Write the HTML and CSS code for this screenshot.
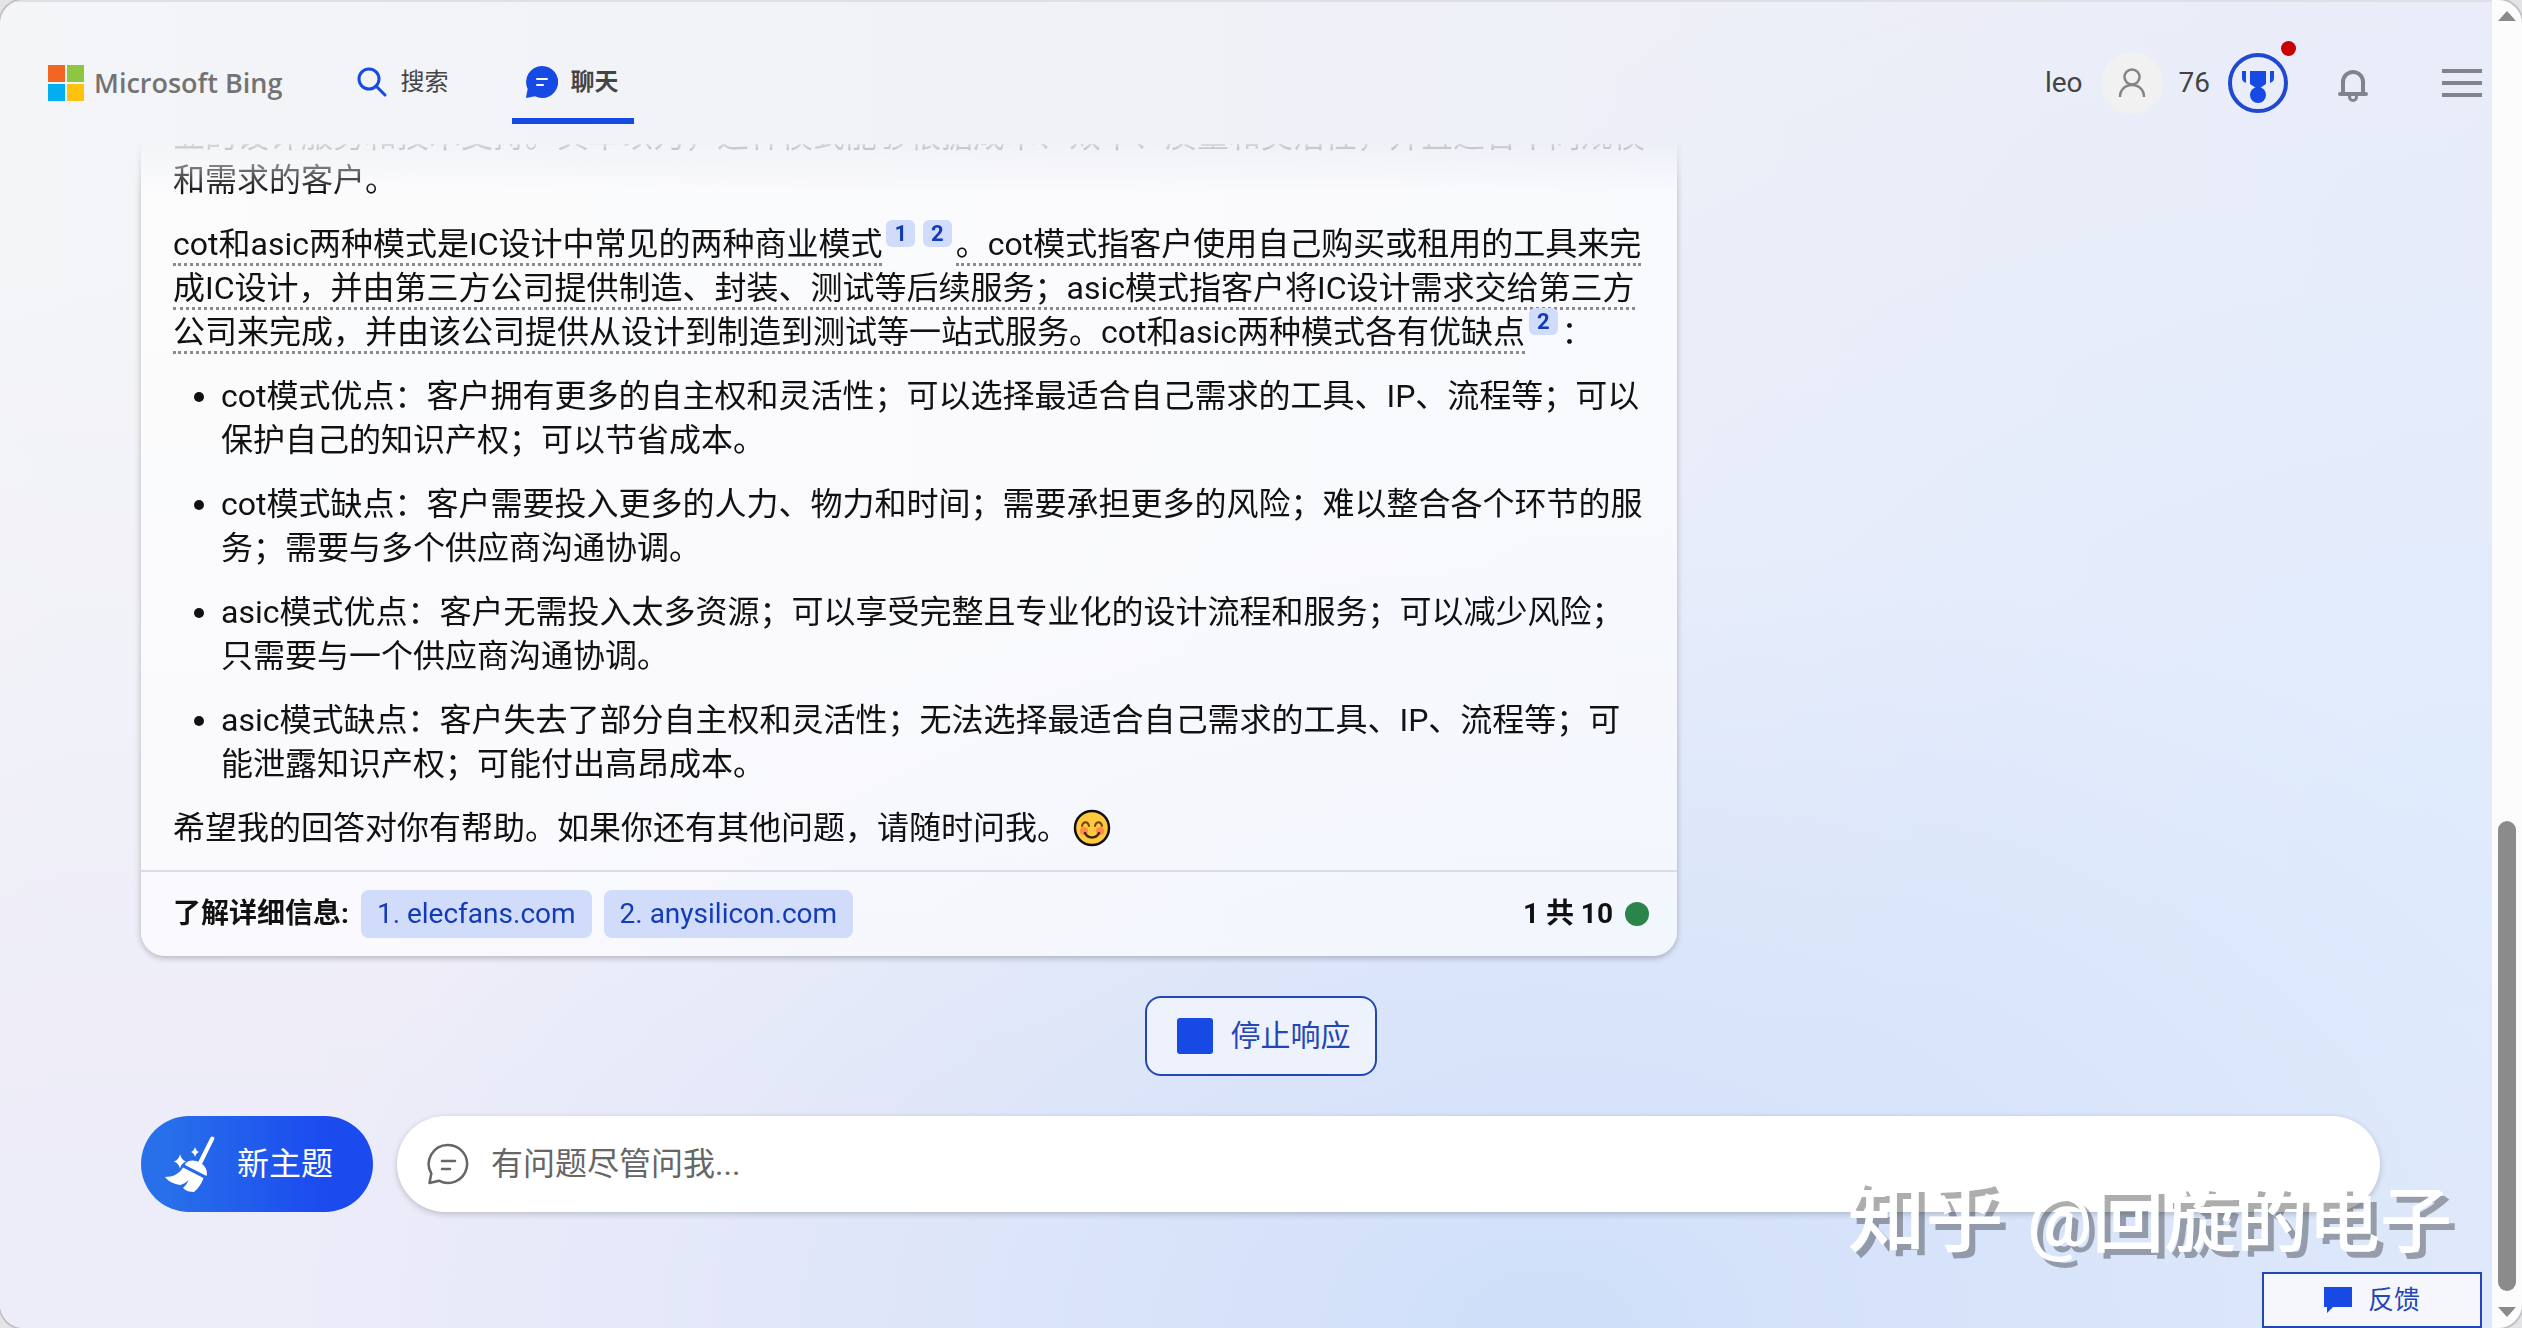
FILE: index.html
```html
<!DOCTYPE html>
<html lang="zh-CN">
<head>
    <meta charset="UTF-8">
    <meta name="viewport" content="width=device-width, initial-scale=1.0">
    <title>Microsoft Bing 聊天</title>
    <link rel="stylesheet" href="styles.css">
</head>
<body>
    <div class="window">
        <div class="page">
            <header class="header">
                <a class="logo" href="#">
                    <svg width="36" height="36" viewBox="0 0 36 36" aria-hidden="true">
                        <rect width="17" height="17" fill="#f26522"/>
                        <rect x="19" width="17" height="17" fill="#8dc63f"/>
                        <rect y="19" width="17" height="17" fill="#00aeef"/>
                        <rect x="19" y="19" width="17" height="17" fill="#ffc20e"/>
                    </svg>
                    <span>Microsoft Bing</span>
                </a>
                <nav class="tabs">
                    <a class="tab" href="#">
                        <svg width="32" height="32" viewBox="0 0 32 32" fill="none" stroke="#174ae4" stroke-width="3" stroke-linecap="round" aria-hidden="true">
                            <circle cx="13" cy="13" r="10"/>
                            <path d="M20 20l9 9"/>
                        </svg>
                        搜索
                    </a>
                    <a class="tab active" href="#">
                        <svg width="32" height="32" viewBox="0 0 32 32" aria-hidden="true">
                            <path d="M16 0a16 16 0 1 1-7 30.300l-7.500 1.500a1.200 1.200 0 0 1-1.400-1.400L1.700 23A16 16 0 0 1 16 0z" fill="#174ae4"/>
                            <path d="M11 13h10M11 19h6" stroke="#fff" stroke-width="2" stroke-linecap="round"/>
                        </svg>
                        聊天
                    </a>
                </nav>
                <div class="account">
                    <a class="user" href="#">
                        leo
                        <span class="avatar">
                            <svg width="28" height="30" viewBox="0 0 28 30" fill="none" stroke="#858585" stroke-width="2.500" aria-hidden="true">
                                <circle cx="14" cy="9" r="7.500"/>
                                <path d="M2 29c0-7 5-12 12-12s12 5 12 12"/>
                            </svg>
                        </span>
                    </a>
                    <a class="rewards" href="#">
                        76
                        <span class="medal">
                            <svg width="60" height="60" viewBox="0 0 60 60" aria-hidden="true">
                                <circle cx="30" cy="30" r="28" fill="none" stroke="#2149d0" stroke-width="4"/>
                                <g fill="#174ae4">
                                    <path d="M22 18h16v13l-6 4h-4l-6-4z"/>
                                    <path d="M18 18v12c-3-1-4-3-4-5v-7zM42 18v12c3-1 4-3 4-5v-7z"/>
                                    <circle cx="30" cy="42" r="8"/>
                                </g>
                            </svg>
                            <span class="dot"></span>
                        </span>
                    </a>
                    <button class="icon-btn bell" aria-label="通知">
                        <svg width="30" height="34" viewBox="0 0 30 34" fill="none" stroke="#80848c" stroke-width="4" aria-hidden="true">
                            <path d="M5 25V13a10 10 0 0 1 20 0v12"/>
                            <path d="M2 25h26" stroke-linecap="round"/>
                            <circle cx="15" cy="28" r="3.500" stroke-width="3"/>
                        </svg>
                    </button>
                    <button class="icon-btn" aria-label="菜单">
                        <svg width="40" height="28" viewBox="0 0 40 28" stroke="#80848c" stroke-width="4" aria-hidden="true">
                            <path d="M0 2h40M0 14h40M0 26h40"/>
                        </svg>
                    </button>
                </div>
            </header>

            <main class="thread">
                <article class="card">
                    <div class="answer">
                        <p>业的设计服务和技术支持。其单以为，这种模式能够根据成本、效率、质量和灵活性，并且适合不同规模和需求的客户。</p>
                        <p><span class="cited">cot和asic两种模式是IC设计中常见的两种商业模式</span><sup><a href="#">1</a></sup><sup><a href="#">2</a></sup><span class="cited">。cot模式指客户使用自己购买或租用的工具来完成IC设计，并由第三方公司提供制造、封装、测试等后续服务；asic模式指客户将IC设计需求交给第三方公司来完成，并由该公司提供从设计到制造到测试等一站式服务。cot和asic两种模式各有优缺点</span><sup><a href="#">2</a></sup>：</p>
                        <ul>
                            <li>cot模式优点：客户拥有更多的自主权和灵活性；可以选择最适合自己需求的工具、IP、流程等；可以保护自己的知识产权；可以节省成本。</li>
                            <li>cot模式缺点：客户需要投入更多的人力、物力和时间；需要承担更多的风险；难以整合各个环节的服务；需要与多个供应商沟通协调。</li>
                            <li>asic模式优点：客户无需投入太多资源；可以享受完整且专业化的设计流程和服务；可以减少风险；只需要与一个供应商沟通协调。</li>
                            <li>asic模式缺点：客户失去了部分自主权和灵活性；无法选择最适合自己需求的工具、IP、流程等；可能泄露知识产权；可能付出高昂成本。</li>
                        </ul>
                        <p>希望我的回答对你有帮助。如果你还有其他问题，请随时问我。<svg class="smile" width="38" height="38" viewBox="0 0 38 38" fill="none" stroke-linecap="round" role="img" aria-label="微笑">
                            <circle cx="19" cy="19" r="17" fill="#ffc83d" stroke="#111" stroke-width="2.500"/>
                            <circle cx="11" cy="22" r="4" fill="#ff8a4c"/>
                            <circle cx="27" cy="22" r="4" fill="#ff8a4c"/>
                            <path d="M9 17c1-5 6-5 7 0M22 17c1-5 6-5 7 0" stroke="#6b4412" stroke-width="2"/>
                            <path d="M12 24c3 6 11 6 14 0" stroke="#3d2a12" stroke-width="2.500"/>
                        </svg></p>
                    </div>
                    <footer class="sources">
                        <span class="learn">了解详细信息:</span>
                        <a class="chip" href="#">1. elecfans.com</a>
                        <a class="chip" href="#">2. anysilicon.com</a>
                        <span class="turns">1 共 10</span>
                        <span class="status"></span>
                    </footer>
                </article>
            </main>

            <div class="stop-row">
                <button class="stop"><span class="stop-square"></span>停止响应</button>
            </div>

            <form class="composer">
                <button class="new-topic" type="button">
                    <svg width="50" height="56" viewBox="0 0 50 56" fill="#fff" aria-hidden="true">
                        <path d="M45.500 1.500c1-2 4.500-.8 3.800 1.500L37 28l-4-1.700z"/>
                        <path d="M20 28c4-5 10-4 15-1.500 5 3 8 8 6.500 13.500L20 29z"/>
                        <path d="M18 31.500L38.500 42c-2 6-5 10-9.500 14-4 0-8-1-11-4 3-3 4.500-5 5.500-8-3 3-5 4-8.500 5C9 48 4 46 0 41c8 0 14-3 18-9.500z"/>
                        <path d="M15 18q1.500 6 6 7.500-4.500 1.500-6 7-1.500-5.500-6-7 4.500-1.500 6-7z"/>
                        <path d="M30 11q1 4 4 5-3 1-4 5-1-4-4-5 3-1 4-5z"/>
                    </svg>
                    新主题
                </button>
                <label class="ask">
                    <svg width="42" height="42" viewBox="0 0 42 42" fill="none" stroke="#666" stroke-width="2.500" stroke-linecap="round" stroke-linejoin="round" aria-hidden="true">
                        <path d="M21 2a19 19 0 1 1-9 35.700L2.500 40l1.800-9.500A19 19 0 0 1 21 2z"/>
                        <path d="M15 18h13M15 26h8"/>
                    </svg>
                    <input type="text" placeholder="有问题尽管问我..." aria-label="有问题尽管问我">
                </label>
            </form>

            <div class="watermark"><span class="site">知乎</span>@回旋的电子</div>
            <button class="feedback">
                <svg width="28" height="26" viewBox="0 0 28 26" fill="#174ae4" aria-hidden="true">
                    <path d="M0 0h28v20H9l-6 6v-6H0z"/>
                </svg>
                反馈
            </button>
        </div>
        <div class="scrollbar" aria-hidden="true">
            <span class="arrow up"></span>
            <span class="track"><span class="thumb"></span></span>
            <span class="arrow down"></span>
        </div>
    </div>
</body>
</html>
```
FILE: styles.css
```css
* {
    box-sizing: border-box;
}

body {
    margin: 0;
    background: #e4e4e6;
    color: #111;
    font-family: Roboto, "Noto Sans CJK SC", sans-serif;
    font-size: 32px;
    line-height: 44px;
}

a {
    color: inherit;
    text-decoration: none;
}

button {
    font: inherit;
    cursor: pointer;
}

svg {
    flex: none;
}

.window {
    display: flex;
    height: 100vh;
    overflow: hidden;
    border-radius: 24px;
    box-shadow: 0 0 0 2px #c0c0c4;
}

.page {
    position: relative;
    flex: 1;
    min-width: 0;
    display: flex;
    flex-direction: column;
    padding-bottom: 116px;
    background:
        radial-gradient(ellipse 50% 60% at 62% 100%, #cfdff9 0%, rgba(207, 223, 249, 0) 100%),
        radial-gradient(ellipse 60% 75% at 100% 65%, #dfebfd 0%, rgba(223, 235, 253, 0) 100%),
        linear-gradient(180deg, rgba(237, 236, 249, 0) 20%, #edecf9 90%),
        linear-gradient(90deg, #f4f5f7, #ebedf8);
    border-top: 2px solid #dfe0e6;
}

/* header */
.header {
    display: flex;
    align-items: center;
    height: 142px;
    padding: 20px 10px 0 48px;
    color: #444;
}

.logo {
    display: flex;
    align-items: center;
    gap: 10px;
    color: #737373;
    font-family: "Open Sans", sans-serif;
    font-size: 27px;
    font-weight: 600;
}

.tabs {
    display: flex;
    gap: 48px;
    margin: 0 0 20px 60px;
    align-self: stretch;
}

.tab {
    display: flex;
    align-items: center;
    gap: 12px;
    padding: 24px 16px 0 14px;
    border-bottom: 6px solid transparent;
    font-size: 24px;
}

.tab.active {
    border-color: #174ae4;
    font-weight: 700;
}

.account {
    display: flex;
    align-items: center;
    margin-left: auto;
    font-size: 28px;
}

.user,
.rewards {
    display: flex;
    align-items: center;
    gap: 18px;
}

.rewards {
    margin-left: 16px;
}

.avatar {
    display: flex;
    align-items: center;
    justify-content: center;
    width: 62px;
    height: 62px;
    border-radius: 50%;
    background: #f1f1f2;
}

.medal {
    position: relative;
    display: flex;
}

.dot {
    position: absolute;
    top: -12px;
    right: -8px;
    width: 15px;
    height: 15px;
    border-radius: 50%;
    background: #c80000;
}

.icon-btn {
    display: flex;
    padding: 0;
    border: 0;
    background: none;
}

.bell {
    margin: 6px 74px 0 50px;
}

/* conversation */
.thread {
    flex: 1;
    min-height: 0;
    display: flex;
    flex-direction: column;
    justify-content: flex-end;
    overflow: hidden;
    padding: 0 112px 40px 141px;
    -webkit-mask-image: linear-gradient(rgba(0, 0, 0, 0.1), #000 48px);
    mask-image: linear-gradient(rgba(0, 0, 0, 0.1), #000 48px);
}

.card {
    max-width: 1536px;
    border-radius: 0 0 24px 24px;
    background: rgba(255, 255, 255, 0.65);
    box-shadow: 0 2px 6px rgba(0, 0, 0, 0.25);
}

.answer {
    padding: 20px 32px;
}

.answer p,
.answer ul {
    margin: 0 0 20px;
}

.answer p:last-child {
    margin-bottom: 0;
}

.answer ul {
    padding-left: 48px;
}

.answer li + li {
    margin-top: 20px;
}

.cited {
    border-bottom: 3px dotted #8a8a8a;
}

sup {
    line-height: 0;
    vertical-align: 14px;
    font-size: 22px;
    font-weight: 700;
}

sup a {
    margin: 0 4px;
    padding: 1px 8px;
    border-radius: 6px;
    background: #d1dbfa;
    color: #123bb6;
}

.smile {
    margin-left: 4px;
    vertical-align: -8px;
}

.sources {
    display: flex;
    align-items: center;
    gap: 12px;
    padding: 18px 28px 18px 32px;
    border-top: 2px solid #d9dce3;
    font-size: 28px;
}

.learn,
.turns {
    font-weight: 700;
}

.turns {
    margin-left: auto;
}

.chip {
    padding: 2px 16px;
    border-radius: 8px;
    background: #d1dbfa;
    color: #123bb6;
}

.status {
    width: 24px;
    height: 24px;
    border-radius: 50%;
    background: #2b8449;
}

/* bottom controls */
.stop-row {
    display: flex;
    justify-content: center;
    padding: 0 112px 40px 141px;
}

.stop {
    display: flex;
    align-items: center;
    gap: 18px;
    height: 80px;
    padding: 0 24px 0 30px;
    border: 2px solid #2447b8;
    border-radius: 16px;
    background: #edf2fd;
    color: #2447b8;
    font-size: 30px;
}

.stop-square {
    width: 36px;
    height: 36px;
    border-radius: 3px;
    background: #174ae4;
}

.composer {
    display: flex;
    gap: 24px;
    padding: 0 112px 0 141px;
}

.new-topic {
    display: flex;
    align-items: center;
    gap: 22px;
    height: 96px;
    padding: 0 40px 0 24px;
    border: 0;
    border-radius: 48px;
    background: linear-gradient(90deg, #2870ea 10%, #1b4aef 80%);
    color: #fff;
    white-space: nowrap;
}

.ask {
    flex: 1;
    display: flex;
    align-items: center;
    gap: 22px;
    height: 96px;
    padding: 0 32px 0 30px;
    border-radius: 48px;
    background: #fff;
    box-shadow: 0 2px 6px rgba(0, 0, 0, 0.2);
}

.ask input {
    flex: 1;
    min-width: 0;
    padding: 0;
    border: 0;
    outline: 0;
    background: none;
    font: inherit;
}

.ask input::placeholder {
    color: #666;
    opacity: 1;
}

.watermark {
    position: absolute;
    right: 40px;
    bottom: 62px;
    color: #fff;
    font-size: 72px;
    font-weight: 500;
    line-height: 88px;
    text-shadow: 6px 6px 0 rgba(0, 0, 0, 0.32);
    pointer-events: none;
}

.watermark .site {
    margin-right: 24px;
    font-size: 78px;
}

.feedback {
    position: absolute;
    right: 10px;
    bottom: 0;
    display: flex;
    align-items: center;
    justify-content: center;
    gap: 16px;
    width: 220px;
    height: 56px;
    border: 2px solid #2447b8;
    background: #f5f7fd;
    color: #2447b8;
    font-size: 26px;
}

/* scrollbar */
.scrollbar {
    display: flex;
    flex-direction: column;
    align-items: center;
    justify-content: space-between;
    width: 30px;
    padding: 11px 0;
    background: #fcfcfc;
}

.track {
    flex: 1;
    display: flex;
    align-items: flex-end;
    padding-bottom: 16px;
}

.thumb {
    width: 18px;
    height: 37%;
    border-radius: 9px;
    background: #8b8b8b;
}

.arrow {
    border: 9px solid transparent;
}

.up {
    border-top: 0;
    border-bottom: 10px solid #8b8b8b;
}

.down {
    border-bottom: 0;
    border-top: 10px solid #8b8b8b;
}
```
